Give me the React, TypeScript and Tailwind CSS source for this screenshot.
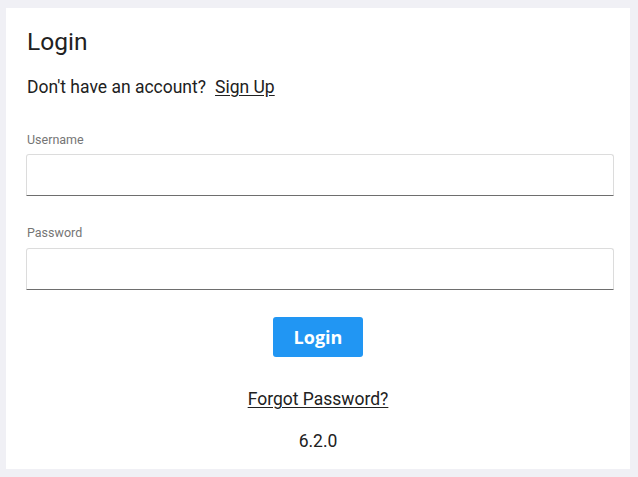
export default function App() {
  return (
    <div className="min-h-screen bg-[#f0f0f5] pt-2 pl-[6px] pr-2 pb-2" style={{ fontFamily: 'Roboto, "Liberation Sans", sans-serif' }}>
      <div className="bg-white w-[624px] h-[461px] pt-[18px] pl-5 pr-4 text-[#212121]">
        <h1 className="text-[24.5px] leading-8 pl-px">Login</h1>

        <p className="mt-[17px] text-[17.5px] leading-6 pl-px">
          Don't have an account?
          <a href="#" className="ml-[9px] underline underline-offset-2">Sign Up</a>
        </p>

        <label className="block mt-[33px] text-[12.5px] leading-4 text-[#757575] pl-px">Username</label>
        <input
          type="text"
          className="mt-[6px] block w-full h-[42px] rounded-t-[3px] border border-[#dcdcdc] border-b-[#6e6e6e] bg-white outline-none px-2"
        />

        <label className="block mt-[29px] text-[12.5px] leading-4 text-[#757575] pl-px">Password</label>
        <input
          type="password"
          className="mt-[7px] block w-full h-[42px] rounded-t-[3px] border border-[#dcdcdc] border-b-[#6e6e6e] bg-white outline-none px-2"
        />

        <div className="flex flex-col items-center pr-1">
          <button
            className="mt-[27px] w-[90px] h-10 rounded-[3px] bg-[#2196f3] text-white text-[18px] font-bold"
            style={{ fontFamily: '"Open Sans", "Noto Sans", sans-serif' }}
          >
            Login
          </button>
          <a href="#" className="mt-[30px] text-[17.5px] leading-6 underline underline-offset-2">Forgot Password?</a>
          <div className="mt-[18px] text-[17.5px] leading-6">6.2.0</div>
        </div>
      </div>
    </div>
  );
}
